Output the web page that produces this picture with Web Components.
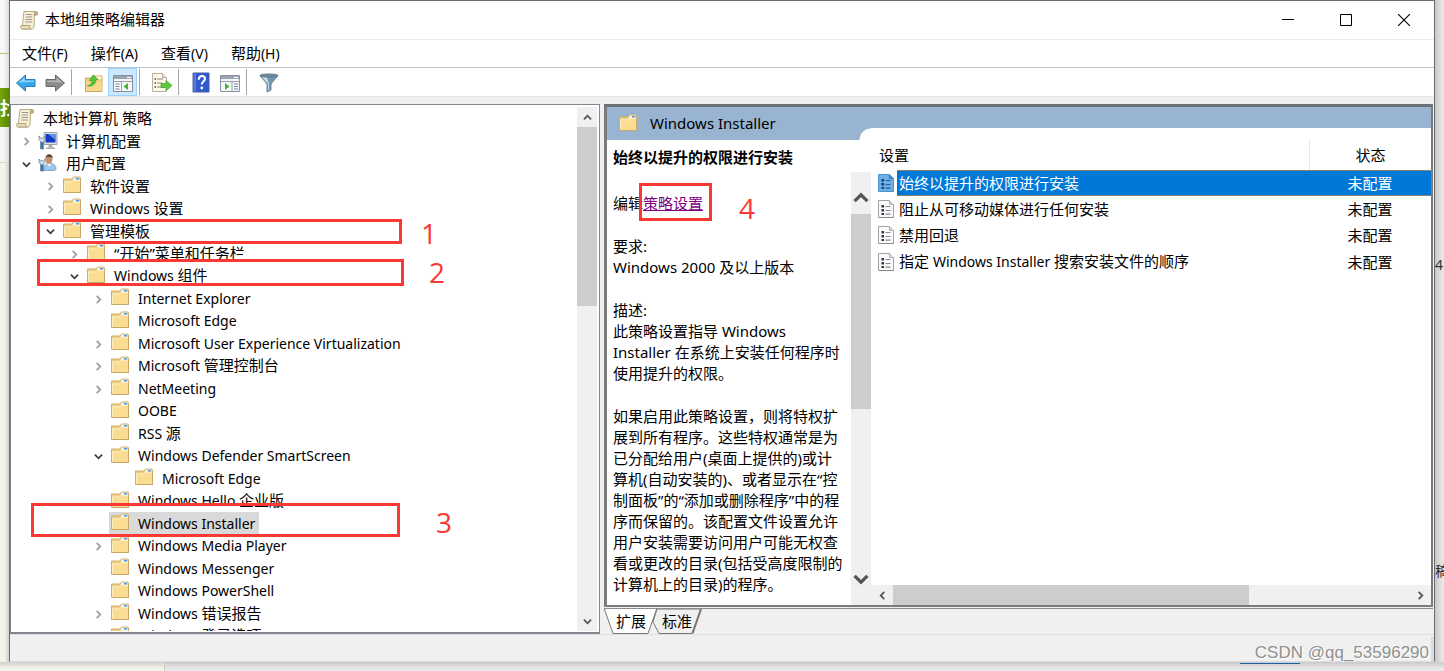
<!DOCTYPE html>
<html lang="zh-CN">
<head>
<meta charset="utf-8">
<title>本地组策略编辑器</title>
<style>
  html, body { margin: 0; height: 100%; }
  body { font: 15px/22px "Noto Sans", "Noto Sans CJK SC", sans-serif; color: #000; overflow: hidden; }
</style>
</head>
<body>
<desk-top>
  <mmc-window>
    <title-bar slot="title">本地组策略编辑器</title-bar>
    <menu-bar slot="menu"></menu-bar>
    <tool-bar slot="tools"></tool-bar>
    <tree-pane slot="tree"></tree-pane>
    <detail-pane slot="detail" heading="Windows Installer">
      <policy-description slot="description"></policy-description>
      <policy-list slot="list"></policy-list>
      <view-tabs slot="tabs"></view-tabs>
    </detail-pane>
    <status-bar slot="status">CSDN @qq_53596290</status-bar>
  </mmc-window>
  <callout-box slot="marks" style="left:37px;top:219px;width:365px;height:25px"></callout-box>
  <callout-number slot="marks" style="left:421px;top:217px">1</callout-number>
  <callout-box slot="marks" style="left:37px;top:259px;width:367px;height:27px"></callout-box>
  <callout-number slot="marks" style="left:429px;top:256px">2</callout-number>
  <callout-box slot="marks" style="left:31px;top:503px;width:369px;height:34px"></callout-box>
  <callout-number slot="marks" style="left:436px;top:506px">3</callout-number>
  <callout-box slot="marks" style="left:639px;top:183px;width:73px;height:38px"></callout-box>
  <callout-number slot="marks" style="left:739px;top:192px">4</callout-number>
</desk-top>

<script>
const ICONS = {
  scroll: `<svg width="20" height="20" viewBox="0 0 20 20"><path d="M5 1.500h12c2.200 0 2 3.500.2 3.500H15.500L15 16c0 1.900-1 3-2.500 3H3z" fill="#f8efd4" stroke="#b0a27c" stroke-width=".9"/><path d="M15.300 5V3.200c0-1.800 3.200-1.800 3.200.2 0 1.500-1 1.800-3.200 1.800z" fill="#cbb88a" stroke="#a3946c" stroke-width=".8"/><path d="M2.600 15.500h8.600c-.8 1.200-.3 3 1 3.500H3.200c-2.200 0-2.300-3.500-.6-3.500z" fill="#e9dcb4" stroke="#a3946c" stroke-width=".8"/><path d="M6.800 4.500h6.500M6.700 7h6.500M6.500 9.500H13M6.300 12H13" stroke="#9c988e" stroke-width="1.200"/></svg>`,
  folder: `<svg width="20" height="20" viewBox="0 0 20 20"><path d="M1.500 3h8.300l1.700-2h6.500l.5 2v13.500h-17z" fill="#edcf8a" stroke="#cfac68"/><path d="M11.500 1.500h6v3h-7z" fill="#f6eedb"/><path d="M14 2.700h3" stroke="#4a97dd" stroke-width="1.600"/><path d="M2 5.500h8L11.500 4H18v12H2z" fill="#fadd93"/><path d="M2.500 15.500V6h8L12 4.500h5.500" fill="none" stroke="#fff0c4"/><path d="M2 16.500h16.500V4" fill="none" stroke="#c7a767"/></svg>`,
  computer: `<svg width="20" height="20" viewBox="0 0 20 20"><path d="M6 1.500h13v12H6z" fill="#dcdfe2" stroke="#a0a5aa"/><path d="M7.500 3h10v8.500h-10z" fill="#1737c9"/><path d="M10 3h7.500v6z" fill="#5b91ee"/><path d="M10.500 14h4v2.500h2.500V18H8v-1.500h2.500z" fill="#aeb2b6"/><path d="M1 5v3c0 1.200.8 1.700 1.500 2v8h3v-8C6.500 9.500 7 9 7 8V5L5.500 7h-3z" fill="#d5dde3" stroke="#6f8598" stroke-width=".8"/><path d="M2.800 11h2.400v7H2.800z" fill="#3576b5"/></svg>`,
  user: `<svg width="20" height="20" viewBox="0 0 20 20"><path d="M6 17.500c0-5 1.500-7 5-7h2c3.500.5 5 2.500 5 5 0 1.500-1 2-3 2z" fill="#9cc7ea" stroke="#6a9cc6" stroke-width=".8"/><path d="M9 10.500l2.500 3.500 2-3.500z" fill="#f3f6fa"/><ellipse cx="11" cy="6.200" rx="3.300" ry="4.500" fill="#c09272"/><path d="M7.500 6c-.5-6.500 7.700-6.500 7.400 0l-1-1.800c-2 .4-3.500-.3-4.700-.8z" fill="#5c4639"/><path d="M1 6v3c0 1 .6 1.500 1.500 1.800V18h3v-7.200C6.400 10.500 7 10 7 9V6L5.500 7.800h-3z" fill="#d5dde3" stroke="#6f8598" stroke-width=".8"/><path d="M2.800 11.500h2.400V18H2.800z" fill="#3576b5"/></svg>`,
  policy: `<svg width="18" height="20" viewBox="0 0 18 20"><path d="M1.500 1.500h11l4 4v13h-15z" fill="#fbfbfb" stroke="#a2a2a2"/><path d="M12.500 1.500v4h4" fill="#ddd" stroke="#b0b0b0"/><path d="M2 18.500h14.500" stroke="#8a8a8a"/><path d="M4.500 6h2.500v2.500H4.500zM4.500 10h2.500v2.500H4.500zM4.500 14h2.500v2H4.500z" fill="#34343e"/><path d="M8.500 7.500h5M8.500 11.500h5M8.500 15.200h5" stroke="#8b86a0" stroke-width="1.200"/></svg>`,
  policyOn: `<svg width="18" height="20" viewBox="0 0 18 20"><path d="M1.500 1.500h11l4 4v13h-15z" fill="#6db0e8" stroke="#4a93d3"/><path d="M12.500 1.500v4h4" fill="#3f8fd3" stroke="#3582c6"/><path d="M4.500 6h2.500v2.500H4.500zM4.500 10h2.500v2.500H4.500zM4.500 14h2.500v2H4.500z" fill="#0f3d70"/><path d="M8.500 7.500h5M8.500 11.500h5M8.500 15.200h5" stroke="#245f98" stroke-width="1.200"/></svg>`,
  back: `<svg width="22" height="20" viewBox="0 0 22 20"><path d="M1.500 10l9-8v4.500H20v7h-9.500V18z" fill="#38a6ea" stroke="#277cb8" stroke-linejoin="round"/><path d="M3.500 9.500l6-5.200v3.200H19V9z" fill="#8ad2fa"/></svg>`,
  forward: `<svg width="22" height="20" viewBox="0 0 22 20"><path d="M20.500 10l-9-8v4.500H2v7h9.500V18z" fill="#8b8b8b" stroke="#686868" stroke-linejoin="round"/><path d="M18.500 9.500l-6-5.200v3.200H3V9z" fill="#b4b4b4"/></svg>`,
  up: `<svg width="20" height="20" viewBox="0 0 20 20"><path d="M1.500 5h7l1.500-2h8v15.500H1.500z" fill="#f0cf80" stroke="#c9a660"/><path d="M12 3.500h5.500V6H11z" fill="#fff8df"/><path d="M2 8.500h16V18H2z" fill="#f5d78e"/><path d="M3.500 13c3.500-1 4.500-3 4.500-5.500H5.500L9 2l5 4.500-2.500.5c0 4-2.500 6.500-8 6z" fill="#55c836" stroke="#38a02c" stroke-width=".8"/></svg>`,
  panelLeft: `<svg width="22" height="20" viewBox="0 0 22 20"><path d="M1.500 2.500h19v16h-19z" fill="#f5f7f9" stroke="#8a919c"/><path d="M2 3h18v3H2z" fill="#9ba4b2"/><path d="M15 4.500h4" stroke="#fff" stroke-width="1.200"/><path d="M2 8.500h18M9.500 9v9" stroke="#9aa1ad"/><path d="M3.500 11h4M3.500 13.500h4M3.500 16h4" stroke="#7289a8" stroke-width="1.200"/><path d="M16 10v7l-4.500-3.500z" fill="#41b53a"/></svg>`,
  panelRight: `<svg width="22" height="20" viewBox="0 0 22 20"><path d="M1.500 2.500h19v16h-19z" fill="#f5f7f9" stroke="#8a919c"/><path d="M2 3h18v3H2z" fill="#9ba4b2"/><path d="M15 4.500h4" stroke="#fff" stroke-width="1.200"/><path d="M2 8.500h18M13 9v9" stroke="#9aa1ad"/><path d="M15 11h4M15 13.500h4M15 16h4" stroke="#7289a8" stroke-width="1.200"/><path d="M6 10v7l4.500-3.500z" fill="#41b53a"/></svg>`,
  exportList: `<svg width="22" height="20" viewBox="0 0 22 20"><path d="M1.500.500h10l4 4v14h-14z" fill="#fdf9e6" stroke="#b5af9c"/><path d="M11.500.5v4h4" fill="#e7e0c5" stroke="#b5af9c"/><path d="M6 6h6M6 10h5M6 14h6" stroke="#85808c" stroke-width="1.200"/><path d="M3.500 6H5M3.500 10H5M3.500 14H5" stroke="#444" stroke-width="1.500"/><path d="M10 10.500h5V7.500l6 5-6 5.200v-3.200h-5z" fill="#5ccc3f" stroke="#48a63b" stroke-width=".8"/></svg>`,
  help: `<svg width="18" height="22" viewBox="0 0 18 22"><path d="M1 1h16v19H1z" fill="#3159d0" stroke="#4a5fa8"/><path d="M1.500 1.500H4v18H1.500z" fill="#5c79d4"/><path d="M6.700 7.700c.1-4.800 6.700-4.500 6.300-.8-.3 2.400-3.200 2.500-3.200 5.600" fill="none" stroke="#fff" stroke-width="2"/><circle cx="9.800" cy="16" r="1.400" fill="#fff"/></svg>`,
  filter: `<svg width="20" height="20" viewBox="0 0 20 20"><path d="M1 2.500L8 11v8l4-2v-6l7-8.500z" fill="#7596ad" stroke="#6d8799"/><path d="M3 4l6 7v6.500l1-.5v-6L8 4z" fill="#c5dae6"/><ellipse cx="10" cy="2.500" rx="9" ry="1.600" fill="#6f8a9c" stroke="#5a7488" stroke-width=".8"/></svg>`
};
const chevron = (dir, size, color, weight) => {
  const paths = { up: 'M1 7l4-4 4 4', down: 'M1 3l4 4 4-4', left: 'M7 1L3 5l4 4', right: 'M3 1l4 4-4 4' };
  return `<svg width="${size}" height="${size}" viewBox="0 0 10 10"><path d="${paths[dir]}" fill="none" stroke="${color}" stroke-width="${weight}"/></svg>`;
};
/* Latin runs are set one size smaller than the Han characters beside them. */
const mixed = s => s.replace(/[A-Za-z()][A-Za-z() ]*/g, m => `<span class="latin">${m}</span>`);
const LATIN = `.latin { font-size: 14px; }`;

function component(name, render) {
  customElements.define(name, class extends HTMLElement {
    connectedCallback() {
      if (this.shadowRoot) return;
      const root = this.attachShadow({ mode: 'open' });
      const t = document.createElement('template');
      t.innerHTML = render(this);
      root.append(t.content.cloneNode(true));
    }
  });
}

component('scroll-bar', el => {
  const h = el.hasAttribute('horizontal');
  const big = el.hasAttribute('large');
  const a = big ? 16 : 9;
  return `<style>
    :host { display: flex; flex-direction: ${h ? 'row' : 'column'}; background: #f0f0f0; flex: none; ${h ? 'height: 20px' : 'width: 20px'}; }
    button { all: unset; box-sizing: border-box; flex: none; display: flex; align-items: center; justify-content: center; ${h ? 'width: 22px' : big ? 'height: 42px' : 'height: 20px'}; }
    ${big ? 'button:first-of-type { padding-top: 10px; } button:last-of-type { padding-bottom: 10px; }' : ''}
    .track { flex: 1; min-height: 0; }
    .thumb { background: #cdcdcd; ${h ? 'height: 100%; width: ' : 'height: '}${el.getAttribute('size')}; }
    svg { display: block; }
  </style>
  <button aria-label="后退">${chevron(h ? 'left' : 'up', a, '#555', 2)}</button>
  <div class="track"><div class="thumb"></div></div>
  <button aria-label="前进">${chevron(h ? 'right' : 'down', a, '#555', 2)}</button>`;
});

component('desk-top', () => `<style>
  :host { position: relative; display: grid; grid-template: minmax(0, 1fr) 9px / 9px minmax(0, 1fr) 9px; height: 100vh; background: #e6e6e6; }
  .left { display: flex; flex-direction: column; overflow: hidden; background: linear-gradient(90deg, #f2f3eb 50%, #cfd0ca); }
  .sky { height: 53px; background: linear-gradient(90deg, #f8f8f8 40%, #dcdcdc); border-bottom: 1px solid #a9cf72; }
  .gap { height: 34px; background: linear-gradient(90deg, #f8f8f8 40%, #dcdcdc); }
  .tag { height: 39px; background: linear-gradient(90deg, #74a806, #5a8500); color: #fff; font: bold 18px/39px "Noto Sans CJK SC", sans-serif; }
  .below { height: 35px; background: linear-gradient(90deg, #f6f6f6 40%, #dadada); border-bottom: 1px solid #dad9bc; }
  .right { display: flex; flex-direction: column; justify-content: space-between; overflow: hidden; padding: 254px 0 80px; background: linear-gradient(90deg, #c8c8c8, #e6e6e6 80%); color: #333; font-size: 14px; }
  .bottom { grid-column: 1 / -1; display: grid; grid-template-columns: 165px 1fr 60px 144px; background: linear-gradient(#c9c9c9, #e8e8e8 70%); }
  .bottom i:first-child { background: linear-gradient(#d0d1ca, #f2f3ea 70%); border-right: 1px solid #ccc; }
  .bottom i:nth-of-type(3) { height: 1px; margin-top: 1px; background: #1763a6; }
</style>
<div class="left"><div class="sky"></div><div class="gap"></div><div class="tag">找</div><div class="below"></div></div>
<slot></slot>
<div class="right"><span>4</span><span>稿</span></div>
<div class="bottom"><i></i><i></i><i></i></div>
<slot name="marks"></slot>`);

component('mmc-window', () => `<style>
  :host { display: flex; flex-direction: column; box-sizing: border-box; border: 1px solid #6b6b6b; border-bottom-color: #dcdcdc; background: #f0f0f0; min-width: 0; }
  main { flex: 1; min-height: 0; display: grid; grid-template: minmax(0, 1fr) / 590px minmax(0, 1fr); gap: 4px; padding-top: 7px; }
</style>
<slot name="title"></slot><slot name="menu"></slot><slot name="tools"></slot>
<main><slot name="tree"></slot><slot name="detail"></slot></main>
<slot name="status"></slot>`);

component('title-bar', () => `<style>
  :host { display: flex; align-items: center; height: 38px; padding: 0 1px 0 9px; background: #fff; border-bottom: 1px solid #ececec; }
  .name { flex: 1; padding: 0 0 2px 6px; }
  svg { display: block; }
  button { all: unset; width: 58px; height: 38px; display: flex; align-items: center; justify-content: center; }
</style>
${ICONS.scroll}<span class="name"><slot></slot></span>
<button aria-label="最小化"><svg width="12" height="12"><path d="M0 5.500h12" stroke="#000"/></svg></button>
<button aria-label="最大化"><svg width="12" height="12"><path d="M.5.5h11v11H.5z" fill="none" stroke="#000"/></svg></button>
<button aria-label="关闭"><svg width="12" height="12"><path d="M0 0l12 12M12 0L0 12" stroke="#000" stroke-width="1.100"/></svg></button>`);

component('menu-bar', () => `<style>
  :host { display: flex; gap: 23px; height: 27px; padding-left: 12px; background: #fff; border-bottom: 1px solid #b9c3cd; }
  button { all: unset; line-height: 25px; }
  ${LATIN}
</style>` + ['文件(F)', '操作(A)', '查看(V)', '帮助(H)'].map(t => `<button>${mixed(t)}</button>`).join(''));

component('tool-bar', () => {
  const b = (icon, label, cls = '') => `<button class="${cls}" aria-label="${label}">${ICONS[icon]}</button>`;
  return `<style>
    :host { display: flex; align-items: center; height: 28px; padding: 0 1px; background: #fff; border-bottom: 1px solid #e4e4e4; }
    button { all: unset; box-sizing: border-box; width: 29px; height: 28px; padding-top: 2px; display: flex; align-items: center; justify-content: center; }
    .on { background: #cce8ff; box-shadow: inset 0 0 0 1px #99d1ff; }
    i { width: 1px; height: 26px; margin: 0 7px 0 2px; background: #a5a5a5; }
    svg { display: block; }
  </style>${b('back', '后退')}${b('forward', '前进')}<i></i>${b('up', '向上')}${b('panelLeft', '显示控制台树', 'on')}<i></i>${b('exportList', '导出列表')}<i></i>${b('help', '帮助')}${b('panelRight', '显示操作窗格')}<i></i>${b('filter', '筛选器')}`;
});

component('tree-item', el => {
  const level = +el.getAttribute('level');
  const state = el.getAttribute('state');
  const mark = state === 'open' ? chevron('down', 9, '#404040', 2) : state === 'closed' ? chevron('right', 9, '#a0a0a0', 2) : '';
  return `<style>
    :host { display: flex; align-items: center; padding-left: ${level ? level * 24 - 17 : 0}px; white-space: nowrap; }
    .mark { display: ${level ? 'flex' : 'none'}; justify-content: center; width: 16px; padding-top: 2px; }
    .body { display: flex; align-items: center; gap: 8px; height: 100%; padding: 0 4px 0 1px; margin-left: 3px; }
    .body svg { display: block; flex: none; }
    .selected { background: #d9d9d9; }
    ${LATIN}
  </style><span class="mark">${mark}</span><span class="body ${el.hasAttribute('selected') ? 'selected' : ''}">${ICONS[el.getAttribute('icon') || 'folder']}<span>${mixed(el.getAttribute('label'))}</span></span>`;
});

const TREE = [
  [0, '本地计算机 策略', '', 'scroll'], [1, '计算机配置', 'closed', 'computer'], [1, '用户配置', 'open', 'user'],
  [2, '软件设置', 'closed'], [2, 'Windows 设置', 'closed'], [2, '管理模板', 'open'],
  [3, '“开始”菜单和任务栏', 'closed'], [3, 'Windows 组件', 'open'],
  [4, 'Internet Explorer', 'closed'], [4, 'Microsoft Edge', ''], [4, 'Microsoft User Experience Virtualization', 'closed'],
  [4, 'Microsoft 管理控制台', 'closed'], [4, 'NetMeeting', 'closed'], [4, 'OOBE', ''], [4, 'RSS 源', ''],
  [4, 'Windows Defender SmartScreen', 'open'], [5, 'Microsoft Edge', ''], [4, 'Windows Hello 企业版', ''],
  [4, 'Windows Installer', ''], [4, 'Windows Media Player', 'closed'], [4, 'Windows Messenger', ''],
  [4, 'Windows PowerShell', ''], [4, 'Windows 错误报告', 'closed'], [4, 'Windows 登录选项', '']
];
component('tree-pane', () => `<style>
  :host { display: flex; box-sizing: border-box; border: 1px solid #828790; border-bottom-width: 2px; background: #fff; padding: 2px 2px 1px 0; overflow: hidden; min-width: 0; }
  .items { flex: 1; min-width: 0; overflow: hidden; display: grid; grid-auto-rows: 22px 23px; align-content: start; }
</style><div class="items" role="tree">${TREE.map(([l, t, s, i]) =>
  `<tree-item role="treeitem" level="${l}" label="${t}" state="${s}" icon="${i || ''}" ${t === 'Windows Installer' ? 'selected' : ''}></tree-item>`).join('')}</div>
<scroll-bar size="37%"></scroll-bar>`);

component('detail-pane', el => `<style>
  :host { display: flex; flex-direction: column; min-width: 0; margin-right: 1px; }
  .frame { flex: 1; min-height: 0; box-sizing: border-box; border: 2px solid #787b7f; border-top: 3px solid #6a7078; border-left-width: 3px; display: grid; grid-template: 21px 12px minmax(0, 1fr) / 264px minmax(0, 1fr); background: #fff; }
  header { grid-area: 1 / 1 / 3 / 2; display: flex; align-items: center; gap: 12px; padding-left: 11px; }
  header span { padding-bottom: 2px; }
  header, .band { background: #99b4d1; }
  header svg { display: block; }
  .band { grid-area: 1 / 2; }
  .curve { grid-area: 2 / 2 / 3 / 3; width: 12px; height: 12px; margin-left: -12px; background: radial-gradient(circle at 100% 100%, #fff 11px, #99b4d1 12px); }
  .text { grid-area: 3 / 1; min-height: 0; display: flex; }
  .list { grid-area: 2 / 2 / 4 / 3; min-height: 0; display: flex; }
  .list ::slotted(*), .text ::slotted(*) { flex: 1; min-width: 0; }
</style>
<section class="frame">
  <header>${ICONS.folder}<span>${el.getAttribute('heading')}</span></header>
  <div class="band"></div>
  <div class="text"><slot name="description"></slot></div>
  <div class="list"><slot name="list"></slot></div>
  <div class="curve"></div>
</section>
<slot name="tabs"></slot>`);

component('policy-description', () => `<style>
  :host { display: flex; justify-content: space-between; overflow: hidden; line-height: 21px; }
  article { flex: 1; padding: 7px 0 0 6px; white-space: nowrap; }
  h2 { margin: 0 0 25px; font-size: 15px; line-height: 21px; font-weight: 700; }
  p { margin: 0 0 22px; }
  a { color: #800080; }
  scroll-bar { margin-top: 32px; }
</style>
<article>
  <h2>始终以提升的权限进行安装</h2>
  <p>编辑<a href="#policy">策略设置</a></p>
  <p>要求:<br>Windows 2000 及以上版本</p>
  <p>描述:<br>此策略设置指导 Windows<br>Installer 在系统上安装任何程序时<br>使用提升的权限。</p>
  <p>如果启用此策略设置，则将特权扩<br>展到所有程序。这些特权通常是为<br>已分配给用户(桌面上提供的)或计<br>算机(自动安装的)、或者显示在“控<br>制面板”的“添加或删除程序”中的程<br>序而保留的。该配置文件设置允许<br>用户安装需要访问用户可能无权查<br>看或更改的目录(包括受高度限制的<br>计算机上的目录)的程序。</p>
</article>
<scroll-bar large size="56%"></scroll-bar>`);

component('policy-list', () => `<style>
  :host { display: flex; flex-direction: column; justify-content: space-between; }
  table { width: 100%; border-collapse: collapse; table-layout: fixed; }
  th { height: 42px; padding: 0 0 0 8px; font-weight: 400; text-align: left; vertical-align: bottom; line-height: 30px; }
  th span { display: block; }
  th:last-child { width: 122px; padding: 0; text-align: center; }
  th:last-child span { border-left: 1px solid #e5e5e5; }
  td { padding: 0; height: 26px; line-height: 26px; }
  td:last-child { text-align: center; }
  .cell { display: flex; align-items: center; }
  .cell svg { display: block; margin: 0 2px 0 6px; }
  .cell span { line-height: 26px; }
  .cell > span { flex: 1; padding-left: 2px; }
  .on .cell > span, .on td:last-child { background: #0078d7; color: #fff; box-shadow: inset 0 1px #8c8072, inset 0 -1px #8c8072; }
  ${LATIN}
</style>
<table><thead><tr><th><span>设置</span></th><th><span>状态</span></th></tr></thead><tbody>${
  ['始终以提升的权限进行安装', '阻止从可移动媒体进行任何安装', '禁用回退', '指定 Windows Installer 搜索安装文件的顺序'].map((t, i) =>
    `<tr class="${i ? '' : 'on'}"><td><div class="cell">${i ? ICONS.policy : ICONS.policyOn}<span>${mixed(t)}</span></div></td><td>未配置</td></tr>`).join('')
}</tbody></table>
<scroll-bar horizontal size="69%"></scroll-bar>`);

component('view-tabs', () => `<style>
  :host { display: grid; grid-template-columns: 54px 38px 1fr; height: 25px; margin-top: 1px; border-top: 1px solid #8c8c8c; }
  button { all: unset; grid-row: 1; z-index: 1; text-align: center; line-height: 23px; white-space: nowrap; }
  button:nth-of-type(1) { grid-column: 1; }
  button:nth-of-type(2) { grid-column: 2; }
  svg { grid-area: 1 / 1 / 2 / 4; display: block; }
</style>
<svg width="110" height="25"><path d="M49 13L55 24.500h33L97 0H53z" fill="#f0f0f0" stroke="#777"/><path d="M97 0L88.500 24.500" stroke="#777" stroke-width="2"/><path d="M0-1L9 24.500h35L53-1z" fill="#fff" stroke="#777"/></svg>
<button>扩展</button><button>标准</button>`);

component('status-bar', () => `<style>
  :host { display: grid; grid-template: 26px / 1fr 166px 107px 3px; height: 26px; border-top: 1px solid #dfdfdf; }
  i { grid-row: 1; margin-top: 2px; border-right: 1px solid #dcdcdc; }
  .mark { grid-area: 1 / 1 / 2 / 5; justify-self: end; align-self: end; padding-right: 2px; color: #909090; font: 17px/16px "Liberation Sans", sans-serif; text-shadow: 1px 1px #fff; }
</style><i></i><i></i><i></i><span class="mark"><slot></slot></span>`);

component('callout-box', () => `<style>
  :host { position: absolute; box-sizing: border-box; border: 3px solid #fa3935; pointer-events: none; }
</style>`);
component('callout-number', () => `<style>
  :host { position: absolute; color: #fa3935; font: 28px/32px "Open Sans", sans-serif; }
</style><slot></slot>`);
</script>
</body>
</html>
